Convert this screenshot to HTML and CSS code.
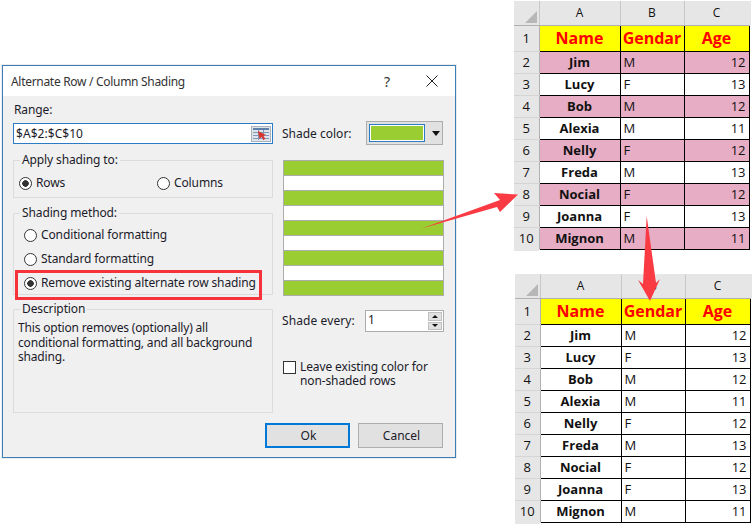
FILE: index.html
```html
<!DOCTYPE html>
<html lang="en">
<head>
<meta charset="utf-8">
<title>Alternate Row / Column Shading</title>
<link rel="stylesheet" href="styles.css">
</head>
<body>
<div class="canvas">
  <section class="dialog">
    <header class="titlebar">
      <span class="title">Alternate Row / Column Shading</span>
      <span class="help">?</span>
      <svg class="close" width="12" height="12" viewBox="0 0 12 12"><path d="M.5.5l11 11M11.5.5l-11 11" stroke="#222" stroke-width="1" fill="none"/></svg>
    </header>
    <div class="body">
      <div class="left">
        <div class="lbl range-lbl">Range:</div>
        <div class="range-input">
          <span>$A$2:$C$10</span>
          <span class="range-btn"><svg width="16" height="12" viewBox="0 0 16 12"><rect x="0" y="0" width="16" height="2" fill="#5f80a8"/><path d="M0 4.500h16M0 7.500h16M0 10.500h16M5.500 2v10M10.500 2v10" stroke="#7e9abb" fill="none"/><path d="M5 3l8 4-3 1 2.500 2.500-2 1.500-2-3-2 2z" fill="#d9342b"/></svg></span>
        </div>
        <fieldset class="group apply">
          <legend>Apply shading to:</legend>
          <div class="radio-row">
            <label class="radio on">Rows</label>
            <label class="radio">Columns</label>
          </div>
        </fieldset>
        <fieldset class="group method">
          <legend>Shading method:</legend>
          <label class="radio">Conditional formatting</label>
          <label class="radio">Standard formatting</label>
          <label class="radio on marked">Remove existing alternate row shading</label>
        </fieldset>
        <fieldset class="group desc">
          <legend>Description</legend>
          <p>This option removes (optionally) all conditional formatting, and all background shading.</p>
        </fieldset>
      </div>
      <div class="right">
        <div class="shade-row">
          <span class="lbl">Shade color:</span>
          <div class="color-pick"><span class="swatch"></span><span class="caret"></span></div>
        </div>
        <div class="preview">
          <i class="g"></i><i></i><i class="g"></i><i></i><i class="g"></i><i></i><i class="g"></i><i></i><i class="g"></i>
        </div>
        <div class="every-row">
          <span class="lbl">Shade every:</span>
          <div class="spin"><span>1</span><span class="spin-btns"><b class="up"></b><b class="down"></b></span></div>
        </div>
        <label class="check"><span class="box"></span><span>Leave existing color for non-shaded rows</span></label>
      </div>
    </div>
    <footer class="buttons">
      <button class="btn primary">Ok</button>
      <button class="btn">Cancel</button>
    </footer>
  </section>

  <table class="sheet top">
    <thead><tr><th class="corner"><span></span></th><th>A</th><th>B</th><th>C</th></tr></thead>
    <tbody>
      <tr class="head"><th>1</th><td>Name</td><td>Gendar</td><td>Age</td></tr>
      <tr class="p"><th>2</th><td>Jim</td><td>M</td><td>12</td></tr>
      <tr><th>3</th><td>Lucy</td><td>F</td><td>13</td></tr>
      <tr class="p"><th>4</th><td>Bob</td><td>M</td><td>12</td></tr>
      <tr><th>5</th><td>Alexia</td><td>M</td><td>11</td></tr>
      <tr class="p"><th>6</th><td>Nelly</td><td>F</td><td>12</td></tr>
      <tr><th>7</th><td>Freda</td><td>M</td><td>13</td></tr>
      <tr class="p"><th>8</th><td>Nocial</td><td>F</td><td>12</td></tr>
      <tr><th>9</th><td>Joanna</td><td>F</td><td>13</td></tr>
      <tr class="p"><th>10</th><td>Mignon</td><td>M</td><td>11</td></tr>
    </tbody>
  </table>

  <table class="sheet bottom">
    <thead><tr><th class="corner"><span></span></th><th>A</th><th>B</th><th>C</th></tr></thead>
    <tbody>
      <tr class="head"><th>1</th><td>Name</td><td>Gendar</td><td>Age</td></tr>
      <tr><th>2</th><td>Jim</td><td>M</td><td>12</td></tr>
      <tr><th>3</th><td>Lucy</td><td>F</td><td>13</td></tr>
      <tr><th>4</th><td>Bob</td><td>M</td><td>12</td></tr>
      <tr><th>5</th><td>Alexia</td><td>M</td><td>11</td></tr>
      <tr><th>6</th><td>Nelly</td><td>F</td><td>12</td></tr>
      <tr><th>7</th><td>Freda</td><td>M</td><td>13</td></tr>
      <tr><th>8</th><td>Nocial</td><td>F</td><td>12</td></tr>
      <tr><th>9</th><td>Joanna</td><td>F</td><td>13</td></tr>
      <tr><th>10</th><td>Mignon</td><td>M</td><td>11</td></tr>
    </tbody>
  </table>

  <svg class="arrows" width="753" height="524" viewBox="0 0 753 524">
    <path d="M421.500 228.500L500 200L494 193L518 194.500L500 212L497 207Z" fill="#fb3b44"/>
    <path d="M646.700 216L656 283L660 279L650 301L638 280L643 284Z" fill="#fb3b44"/>
  </svg>
</div>
</body>
</html>
```
FILE: styles.css
```css
*, *::before, *::after { box-sizing: border-box; }
html, body { margin: 0; padding: 0; background: #fff; }
.canvas { position: relative; width: 753px; height: 524px; overflow: hidden; font-family: "Noto Sans", sans-serif; color: #1b1b2a; }

.dialog { position: absolute; left: 2px; top: 65px; width: 454px; height: 393px; background: #f0f0f0; border: 1px solid #3c7fb8; box-shadow: 0 0 0 1px #ececec; display: flex; flex-direction: column; font-size: 12px; }
.titlebar { height: 30px; background: #fff; display: flex; align-items: center; padding: 0 17px 0 8px; flex: none; }
.title { flex: 1; color: #333; letter-spacing: -.3px; }
.help { margin-right: 36px; font-size: 14px; color: #333; }
.body { display: flex; padding: 5px 11px 0 10px; flex: none; }
.left { width: 260px; flex: none; letter-spacing: -.12px; }
.right { width: 161px; margin-left: 10px; flex: none; }
.lbl { line-height: 17px; }
.range-lbl { margin-left: 1px; }
.range-input { margin-top: 5px; height: 21px; border: 1px solid #2b7cc4; background: #fff; display: flex; align-items: center; justify-content: space-between; padding-left: 2px; font-size: 12px; letter-spacing: .05px; }
.range-btn { width: 20px; height: 16px; margin-right: 1px; background: #dfe4ea; border: 1px solid #aab2bc; display: flex; align-items: center; justify-content: center; overflow: hidden; }
.group { border: 1px solid #dcdcdc; margin: 0; padding: 0; position: relative; }
.group legend { margin-left: 6px; padding: 0 2px; line-height: 16px; }
.apply { height: 46px; margin-top: 8px; }
.radio-row { display: flex; padding: 7px 0 0 5px; }
.radio-row .radio:first-child { width: 138px; }
.radio { display: flex; align-items: center; gap: 4px; line-height: 16px; white-space: nowrap; }
.radio::before { content: ""; width: 13px; height: 13px; border-radius: 50%; border: 1px solid #333; background: #fff; flex: none; }
.radio.on::before { background: radial-gradient(circle, #333 0 3px, #fff 3.5px); }
.method { height: 90px; margin-top: 7px; }
.method .radio { height: 24px; margin-left: 10px; }
.method .radio:first-of-type { margin-top: 2px; }
.marked { position: relative; }
.marked::after { content: ""; position: absolute; left: -9px; top: -1px; width: 247px; height: 30px; border: 3px solid #f6333b; pointer-events: none; }
.desc { height: 112px; margin-top: 6px; }
.desc p { margin: 4px 4px 0; line-height: 14.5px; letter-spacing: -.18px; }

.shade-row { display: flex; align-items: center; justify-content: space-between; margin: 20px 1px 0 -1px; height: 24px; }
.color-pick { width: 77px; height: 24px; border: 1px solid #adadad; background: #e1e1e1; display: flex; align-items: center; padding-left: 3px; }
.swatch { width: 54px; height: 16px; background: #9acd32; outline: 1px solid #2b7cc4; border: 1px solid #fff; }
.caret { margin-left: 8px; border: 4px solid transparent; border-top: 5px solid #111; border-bottom: 0; }
.preview { margin-top: 15px; height: 136px; width: 161px; border: 1px solid #adadad; display: flex; flex-direction: column; gap: 1px; background: #adadad; }
.preview i { flex: 1; background: #fff; }
.preview i.g { background: #9acd32; }
.every-row { display: flex; align-items: center; justify-content: space-between; margin: 14px 0 0 -1px; height: 22px; letter-spacing: .1px; }
.every-row .lbl { margin-top: -2px; }
.spin { width: 79px; height: 22px; border: 1px solid #adadad; background: #fff; display: flex; justify-content: space-between; padding-left: 2px; line-height: 18px; }
.spin-btns { display: flex; flex-direction: column; gap: 1px; padding: 1px; }
.spin-btns b { width: 14px; height: 8.5px; background: #e1e1e1; border: 1px solid #c0c0c0; display: flex; align-items: center; justify-content: center; }
.spin-btns b::after { content: ""; border: 3px solid transparent; }
.spin-btns .up::after { border-bottom: 3px solid #111; border-top: 0; }
.spin-btns .down::after { border-top: 3px solid #111; border-bottom: 0; }
.check { display: flex; gap: 4px; margin-top: 28px; line-height: 14px; letter-spacing: -.12px; }
.box { width: 13px; height: 13px; border: 1px solid #333; background: #fff; flex: none; margin-top: 1px; }

.buttons { display: flex; justify-content: flex-end; gap: 8px; padding: 10px 12px 0 0; }
.btn { width: 85px; height: 25px; background: #e1e1e1; border: 1px solid #adadad; font: inherit; color: #1b1b2a; padding: 0 0 0 2px; }
.btn.primary { border: 2px solid #0078d7; }

.sheet { position: absolute; border-collapse: collapse; table-layout: fixed; width: 235px; font-family: "Open Sans", sans-serif; font-size: 12px; color: #111; background: #fff; }
.sheet.top { left: 514px; top: 1px; }
.sheet.bottom { left: 515px; top: 274px; }
.sheet thead th { height: 24px; background: #e6e6e6; font-weight: 400; border-right: 1px solid #c8c8c8; border-bottom: 1px solid #b0b0b0; }
.sheet thead th:last-child { position: relative; }
.sheet thead th:last-child::after { content: ""; position: absolute; left: 100%; top: 0; width: 2px; height: 100%; background: #e6e6e6; }
.sheet th.corner { width: 25px; position: relative; }
.sheet th.corner span { position: absolute; right: 2px; bottom: 2px; border-left: 12px solid transparent; border-bottom: 12px solid #b7b7b7; }
.sheet thead th:nth-child(2) { width: 81px; }
.sheet thead th:nth-child(3) { width: 64px; }
.sheet thead th:nth-child(4) { width: 65px; }
.sheet tbody th { height: 22px; background: #e6e6e6; font-weight: 400; border-right: 1px solid #b0b0b0; border-bottom: 1px solid #d5d5d5; padding: 0; font-size: 13px; position: relative; }
.sheet tbody tr:last-child th::after { content: ""; position: absolute; left: 0; top: 100%; width: 100%; height: 2px; background: #e6e6e6; }
.sheet tbody td { border: 1px solid #000; padding: 0 3px; line-height: 20px; font-size: 13px; overflow: hidden; white-space: nowrap; }
.sheet td:nth-child(2) { text-align: center; font-weight: 700; }
.sheet td:nth-child(4) { text-align: right; }
.sheet tr.p td { background: #e6adc4; }
.sheet tr.head th { height: 26px; }
.sheet tr.head td { background: #ffff00; color: #f00; font-weight: 700; font-size: 16px; text-align: center; padding: 0 0 1px; }

.arrows { position: absolute; left: 0; top: 0; pointer-events: none; }
```
